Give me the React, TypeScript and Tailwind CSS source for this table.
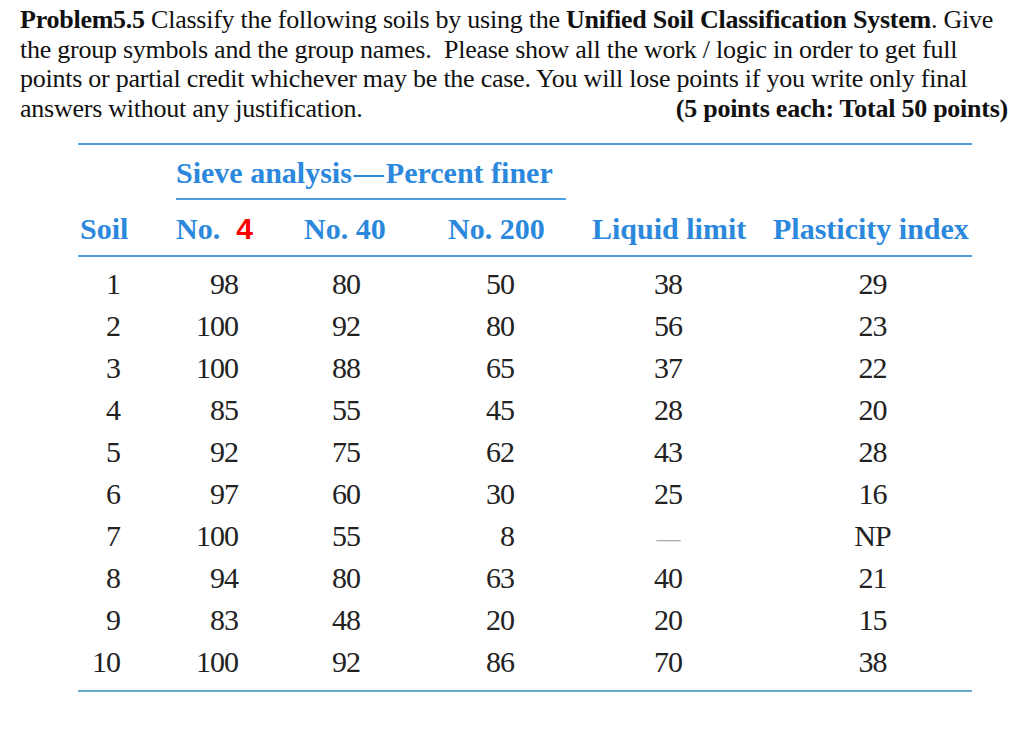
import React from "react";

const ROWS = [
  ["1", "98", "80", "50", "38", "29"],
  ["2", "100", "92", "80", "56", "23"],
  ["3", "100", "88", "65", "37", "22"],
  ["4", "85", "55", "45", "28", "20"],
  ["5", "92", "75", "62", "43", "28"],
  ["6", "97", "60", "30", "25", "16"],
  ["7", "100", "55", "8", "—", "NP"],
  ["8", "94", "80", "63", "40", "21"],
  ["9", "83", "48", "20", "20", "15"],
  ["10", "100", "92", "86", "70", "38"],
];

const GRID = "grid grid-cols-[98px_128px_144px_144px_181px_199px]";

export default function App() {
  return (
    <div className="w-[1024px] h-[742px] bg-white overflow-hidden font-['Liberation_Serif',serif]">
      {/* Problem statement */}
      <div className="h-[138px] pl-[20px] pr-[16px] pt-[5px] text-[26px] leading-[29.5px] text-[#111] tracking-[-0.25px]">
        <div className="whitespace-nowrap">
          <b>Problem5.5</b> Classify the following soils by using the <b>Unified Soil Classification System</b>. Give
        </div>
        <div className="whitespace-nowrap">
          the group symbols and the group names.&nbsp; Please show all the work / logic in order to get full
        </div>
        <div className="whitespace-nowrap">
          points or partial credit whichever may be the case. You will lose points if you write only final
        </div>
        <div className="flex justify-between whitespace-nowrap">
          <span>answers without any justification.</span>
          <b>(5 points each: Total 50 points)</b>
        </div>
      </div>

      {/* Table */}
      <div className="pt-[5px] pb-[20px]">
        <div className="ml-[78px] w-[894px]">
          <div className="h-[2px] bg-[#4c9fe0]" />

          <div className="h-[53px] pl-[98px] pt-[1px] flex items-center text-[30px] font-bold text-[#2b88dc] whitespace-nowrap">
            Sieve analysis<span className="mx-[2px]">—</span>Percent finer
          </div>
          <div className="ml-[98px] w-[390px] h-[2px] bg-[#4c9fe0]" />

          <div className={`${GRID} h-[55px] text-[30px] font-bold text-[#2b88dc] whitespace-nowrap`}>
            <div className="pl-[2px] pt-[1px] flex items-center">Soil</div>
            <div className="flex items-stretch">
              <span className="pt-[1px] flex items-center">No.</span>
              <span className="w-[49px] bg-white flex items-center justify-center pt-[1px] font-['Liberation_Sans',sans-serif] text-[30px] text-[#ff0000]">
                4
              </span>
            </div>
            <div className="pt-[1px] flex items-center">No. 40</div>
            <div className="pt-[1px] flex items-center">No. 200</div>
            <div className="pt-[1px] flex items-center">Liquid limit</div>
            <div className="pt-[1px] flex items-center">Plasticity index</div>
          </div>
          <div className="h-[2px] bg-[#4c9fe0]" />

          <div className="pt-[4px] pb-[9px] text-[30px] tracking-[-1px] text-[#222]">
            {ROWS.map((r) => (
              <div key={r[0]} className={`${GRID} h-[42px] items-center`}>
                <div className="text-right pr-[56px]">{r[0]}</div>
                <div className="text-right pr-[66px]">{r[1]}</div>
                <div className="text-right pr-[88px]">{r[2]}</div>
                <div className="text-right pr-[78px]">{r[3]}</div>
                <div className="text-center pr-[29px]">
                  {r[4] === "—" ? <span className="text-[#aaa] text-[24px]">—</span> : r[4]}
                </div>
                <div className="text-center">{r[5]}</div>
              </div>
            ))}
          </div>
          <div className="h-[2px] bg-[#6aa9cc]" />
        </div>
      </div>
    </div>
  );
}
